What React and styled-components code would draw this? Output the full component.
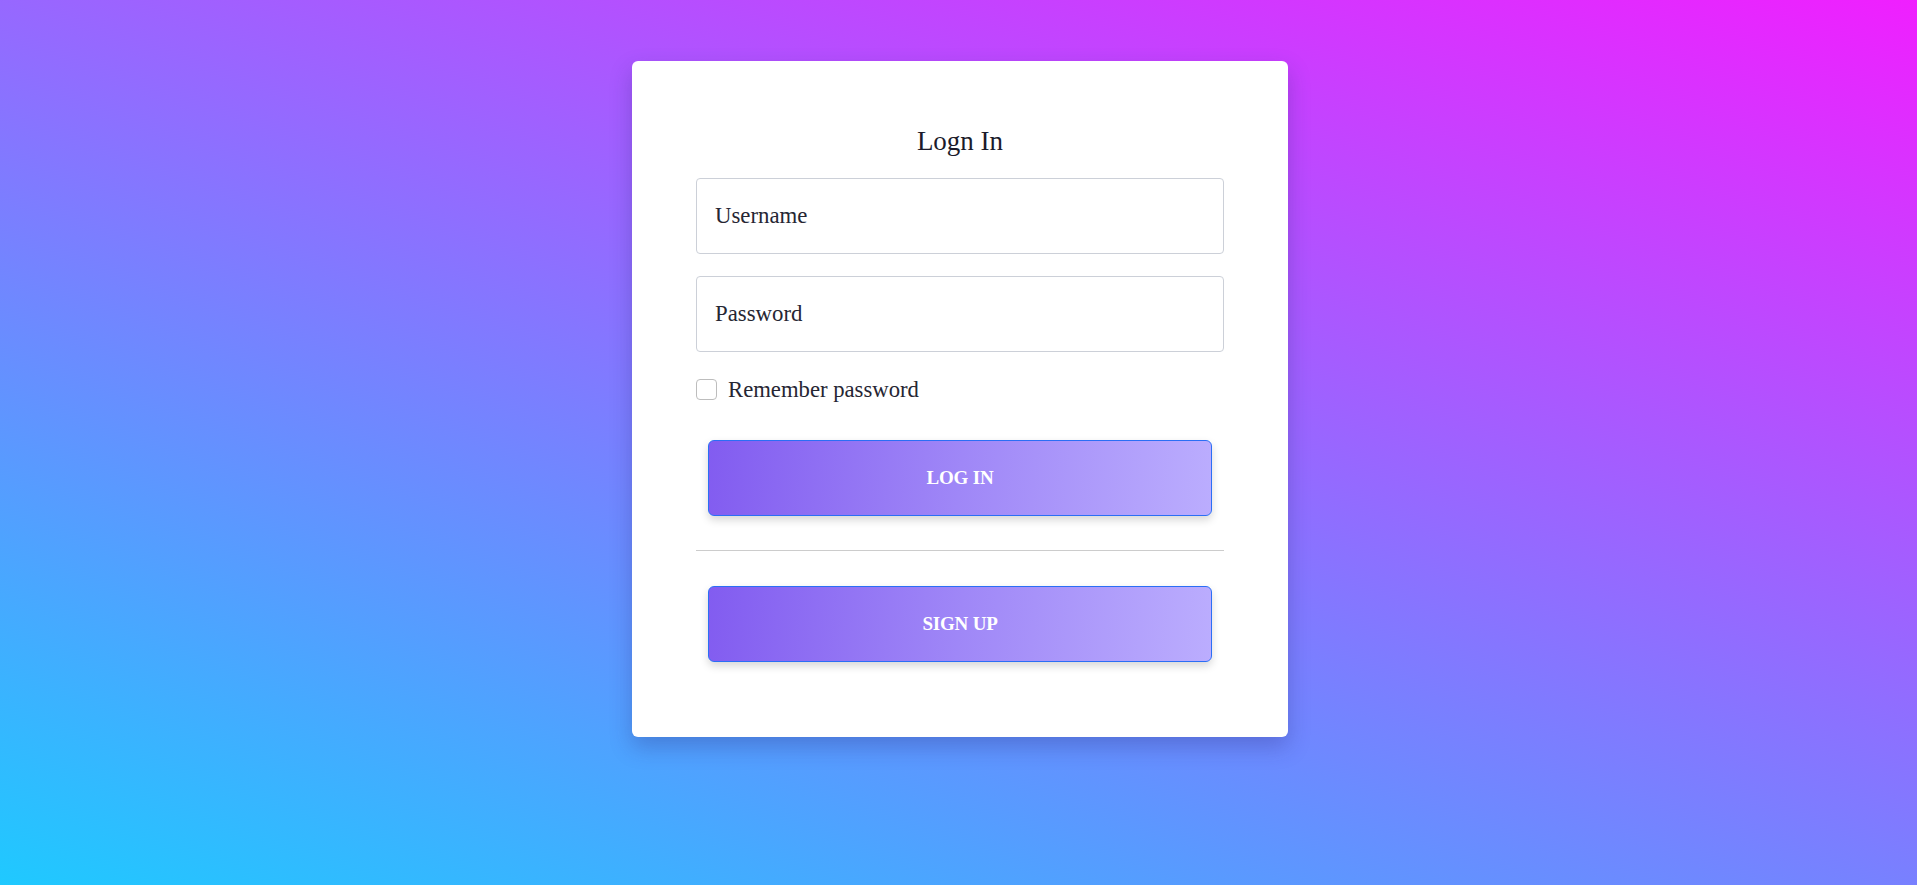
import React, { useState } from "react";
import styled, { createGlobalStyle } from "styled-components";

const GlobalStyle = createGlobalStyle`
  * {
    box-sizing: border-box;
  }

  html, body {
    margin: 0;
    padding: 0;
    height: 100%;
  }

  body {
    font-family: "Liberation Serif", "Times New Roman", serif;
    background: linear-gradient(19deg, #1fc9ff 0%, #f01fff 100%);
    background-attachment: fixed;
  }
`;

const Page = styled.div`
  min-height: 885px;
  display: flex;
  justify-content: center;
  align-items: flex-start;
  padding: 61px 0 0 3px;
`;

const Card = styled.form`
  width: 656px;
  background: #fff;
  border-radius: 6px;
  box-shadow: 0 10px 22px rgba(40, 40, 120, 0.28);
  padding: 64px 64px 75px;
  display: flex;
  flex-direction: column;
`;

const Title = styled.h2`
  margin: 0 0 21px;
  font-size: 27px;
  line-height: 32px;
  font-weight: 400;
  color: #1b1b2b;
  text-align: center;
`;

const Field = styled.input`
  width: 100%;
  height: 76px;
  margin-bottom: ${(p) => p.$gap || 0}px;
  padding: 0 18px;
  border: 1px solid #ccd0d8;
  border-radius: 4px;
  font-family: inherit;
  font-size: 22.8px;
  color: #222;
  outline: none;

  &::placeholder {
    color: #262633;
  }
`;

const CheckRow = styled.label`
  display: flex;
  align-items: center;
  gap: 11px;
  margin-top: 27px;
  font-size: 22.7px;
  line-height: 20px;
  color: #262633;
  cursor: pointer;
`;

const Check = styled.input`
  appearance: none;
  margin: 0;
  width: 21px;
  height: 21px;
  border: 1px solid #bdbdbd;
  border-radius: 4px;
  background: #fff;
  cursor: pointer;

  &:checked {
    background: #845ef0;
    border-color: #845ef0;
  }
`;

const Button = styled.button`
  margin: ${(p) => p.$top}px 12px 0;
  height: 76px;
  border: 1px solid #2b6ef5;
  border-radius: 6px;
  background: linear-gradient(95deg, #825cf0 0%, #9f87f7 50%, #bbadfe 100%);
  box-shadow: 0 4px 9px rgba(0, 0, 0, 0.16);
  color: #fff;
  font-family: inherit;
  font-size: 19px;
  font-weight: 700;
  letter-spacing: -0.2px;
  text-transform: uppercase;
  cursor: pointer;
`;

const Divider = styled.hr`
  margin: 34px 0 0;
  border: none;
  border-top: 1px solid #cccccc;
`;

export default function App() {
  const [remember, setRemember] = useState(false);

  return (
    <>
      <GlobalStyle />
      <Page>
        <Card onSubmit={(e) => e.preventDefault()}>
          <Title>Logn In</Title>
          <Field type="text" placeholder="Username" $gap={22} />
          <Field type="password" placeholder="Password" />
          <CheckRow>
            <Check
              type="checkbox"
              checked={remember}
              onChange={() => setRemember(!remember)}
            />
            Remember password
          </CheckRow>
          <Button type="submit" $top={40}>Log In</Button>
          <Divider />
          <Button type="button" $top={35}>Sign Up</Button>
        </Card>
      </Page>
    </>
  );
}
